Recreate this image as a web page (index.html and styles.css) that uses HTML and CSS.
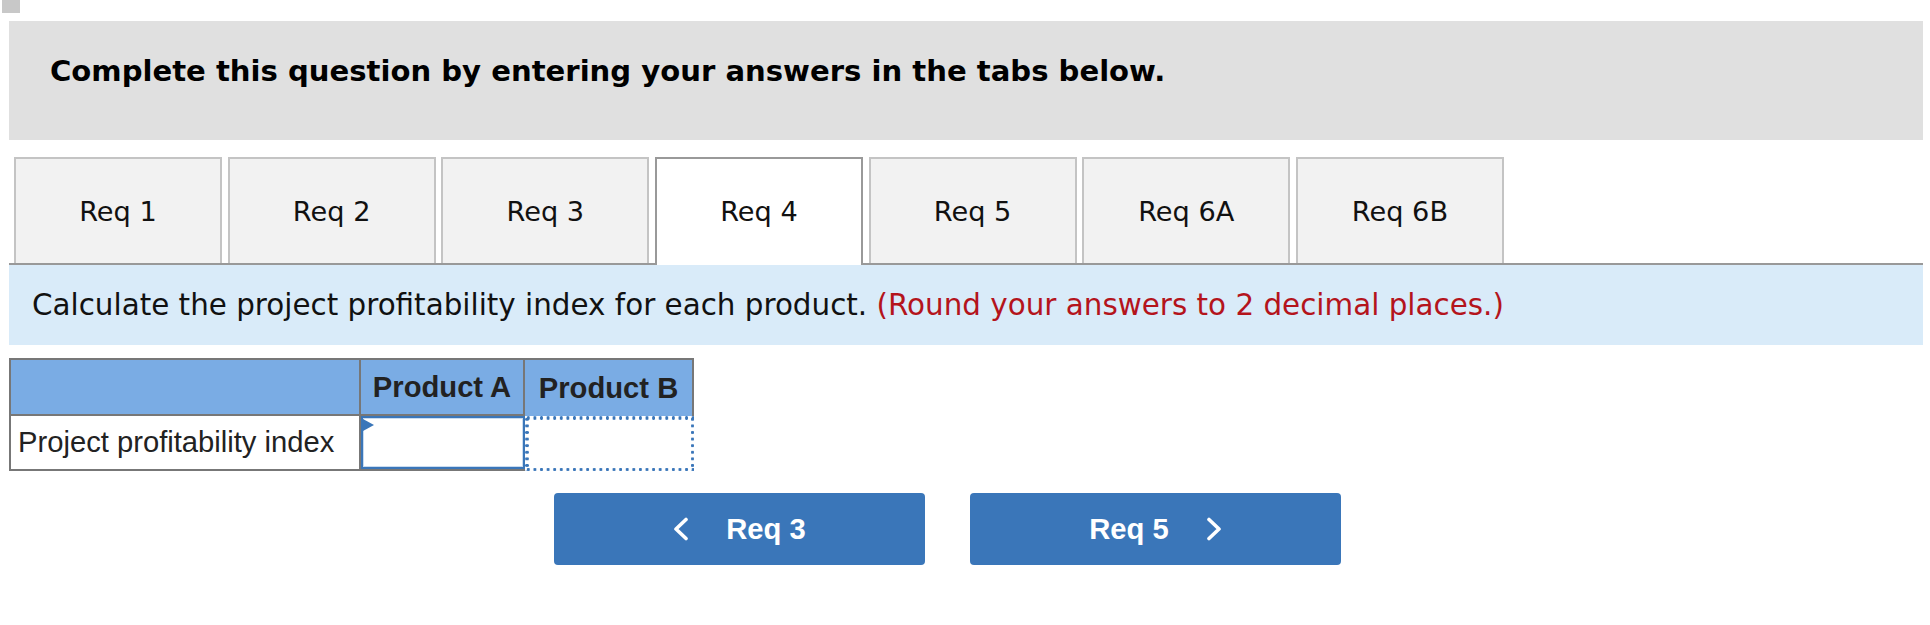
FILE: index.html
```html
<!DOCTYPE html>
<html lang="en">
<head>
  <meta charset="UTF-8">
  <meta name="viewport" content="width=device-width, initial-scale=1.0">
  <title>Req 4</title>
  <link rel="stylesheet" href="styles.css">
</head>
<body>

<div class="corner"></div>

<div class="page">
  <div class="question-box">
    <h2>Complete this question by entering your answers in the tabs below.</h2>
  </div>

  <!-- Tabs -->
  <div class="tabs">
    <div class="tab">Req 1</div>
    <div class="tab">Req 2</div>
    <div class="tab">Req 3</div>
    <div class="tab active">Req 4</div>
    <div class="tab">Req 5</div>
    <div class="tab">Req 6A</div>
    <div class="tab">Req 6B</div>
  </div>

  <div class="instructions">
    <p>Calculate the project profitability index for each product. <span class="note">(Round your answers to 2 decimal places.)</span></p>
  </div>

  <!-- Answer table -->
  <table class="answer-table">
    <tr>
      <th class="blank"></th>
      <th class="col-a">Product A</th>
      <th class="col-b">Product B</th>
    </tr>
    <tr>
      <td class="label">Project profitability index</td>
      <td class="cell-a">
        <span class="marker"></span>
        <input type="text" aria-label="Product A">
      </td>
      <td class="cell-b">
        <input type="text" aria-label="Product B">
      </td>
    </tr>
  </table>

  <!-- Navigation -->
  <div class="nav">
    <button class="nav-button">
      <svg width="16" height="24" viewBox="0 0 16 24"><polyline points="13,2.5 3,12 13,21.5" fill="none" stroke="#fff" stroke-width="3.6" stroke-linecap="round" stroke-linejoin="round"/></svg>
      <span>Req 3</span>
    </button>
    <button class="nav-button">
      <span>Req 5</span>
      <svg width="16" height="24" viewBox="0 0 16 24"><polyline points="3,2.5 13,12 3,21.5" fill="none" stroke="#fff" stroke-width="3.6" stroke-linecap="round" stroke-linejoin="round"/></svg>
    </button>
  </div>
</div>

</body>
</html>
```

FILE: styles.css
```css
body {
  margin: 0;
  background-color: #ffffff;
  font-family: "DejaVu Sans", Verdana, sans-serif;
  color: #000;
}
.corner {
  width: 18px;
  height: 13px;
  margin-left: 2px;
  background-color: #c8c8c8;
}
.page {
  padding: 8px 7px 0 9px;
}
.question-box {
  background-color: #e0e0e0;
  height: 119px;
  padding: 33px 0 0 41px;
  box-sizing: border-box;
}
.question-box h2 {
  margin: 0;
  font-size: 29.1px;
  line-height: 34px;
  font-weight: bold;
}
.tabs {
  display: flex;
  gap: 5.67px;
  margin-top: 17px;
  padding-left: 5px;
  border-bottom: 2px solid #999;
}
.tab {
  width: 208px;
  height: 106px;
  box-sizing: border-box;
  display: flex;
  align-items: center;
  justify-content: center;
  background-color: #f2f2f2;
  border: 2px solid #c4c4c4;
  border-bottom: none;
  font-size: 27.2px;
  color: #111;
}
.tab.active {
  background-color: #ffffff;
  border-color: #999;
  height: 108px;
  padding-bottom: 2px;
  margin-bottom: -2px;
}
.instructions {
  background-color: #d9ebf9;
  height: 80px;
  display: flex;
  align-items: center;
  padding-left: 23px;
}
.instructions p {
  margin: 0;
  font-size: 29.4px;
  color: #111;
}
.note {
  color: #b4141c;
}
.answer-table {
  margin-top: 13px;
  border-collapse: separate;
  border-spacing: 0;
  font-family: "Liberation Sans", Arial, sans-serif;
  font-size: 29.2px;
  color: #222;
}
.answer-table th {
  height: 54px;
  padding: 0;
  background-color: #7aace4;
  border-top: 2px solid #777;
  border-right: 2px solid #777;
  font-weight: bold;
  text-align: center;
}
.answer-table th.blank {
  width: 348px;
  border-left: 2px solid #777;
  border-bottom: 2px solid #777;
}
.answer-table th.col-a {
  width: 162px;
  border-bottom: 2px solid #777;
}
.answer-table th.col-b {
  width: 167px;
}
.answer-table td {
  height: 51px;
  padding: 0;
}
.answer-table td.label {
  padding-left: 7px;
  border-left: 2px solid #777;
  border-right: 2px solid #777;
  border-bottom: 2px solid #777;
  white-space: nowrap;
}
.answer-table td.cell-a {
  position: relative;
  border-bottom: 2px solid #777;
}
/* dotted frame drawn as round dots, spaced like the original */
.answer-table td.cell-b {
  border: 2px solid transparent;
  background-origin: border-box;
  background-image:
    radial-gradient(circle, #3a76b9 1.4px, transparent 1.9px),
    radial-gradient(circle, #3a76b9 1.4px, transparent 1.9px),
    radial-gradient(circle, #3a76b9 1.4px, transparent 1.9px),
    radial-gradient(circle, #3a76b9 1.4px, transparent 1.9px);
  background-size: 6.6px 3.5px, 6.6px 3.5px, 3.5px 6.6px, 3.5px 6.6px;
  background-position: left top, left bottom, left top, right top;
  background-repeat: repeat-x, repeat-x, repeat-y, repeat-y;
}
.answer-table input {
  display: block;
  width: 100%;
  height: 100%;
  box-sizing: border-box;
  margin: 0;
  border: none;
  background: transparent;
  font-size: 28.8px;
}
.cell-a input {
  border: 2px solid #3a76b9;
  box-shadow: inset 0 0 0 1px #c9dcf0;
}
.marker {
  position: absolute;
  left: 2px;
  top: 3px;
  width: 0;
  height: 0;
  border-left: 11px solid #3a76b9;
  border-top: 6.5px solid transparent;
  border-bottom: 6.5px solid transparent;
}
.nav {
  display: flex;
  gap: 45px;
  margin-top: 22px;
  padding-left: 545px;
}
.nav-button {
  width: 371px;
  height: 72px;
  display: flex;
  align-items: center;
  justify-content: center;
  gap: 37px;
  background-color: #3a76b9;
  border: none;
  border-radius: 4px;
  color: #ffffff;
  font-family: "Liberation Sans", Arial, sans-serif;
  font-size: 29.2px;
  font-weight: bold;
  cursor: pointer;
}
```
